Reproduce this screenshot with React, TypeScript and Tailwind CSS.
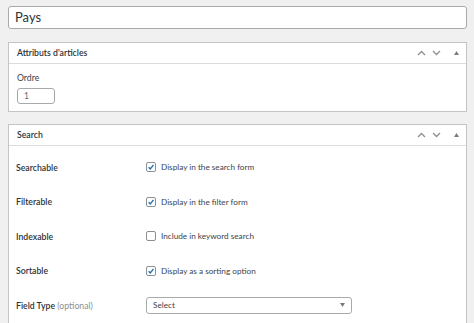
import React from "react";

const font = { fontFamily: '"Lato", "Noto Sans", sans-serif' };

function HeaderIcons() {
  return (
    <div className="flex items-center text-[#8c8f94]">
      <svg width="9" height="6" viewBox="0 0 9 6" fill="none" stroke="currentColor" strokeWidth="1.3">
        <path d="M1 5 L4.5 1.5 L8 5" />
      </svg>
      <svg className="ml-[6px]" width="9" height="6" viewBox="0 0 9 6" fill="none" stroke="currentColor" strokeWidth="1.3">
        <path d="M1 1 L4.5 4.5 L8 1" />
      </svg>
      <svg className="ml-[13px]" width="5" height="4" viewBox="0 0 5 4" fill="#787c82">
        <path d="M0 4 L2.5 0 L5 4 Z" />
      </svg>
    </div>
  );
}

function Checkbox({ checked }: { checked: boolean }) {
  return (
    <span className="flex h-[10px] w-[10px] items-center justify-center rounded-[2px] border border-[#8c8f94] bg-white">
      {checked && (
        <svg width="8" height="8" viewBox="0 0 8 8" fill="none" stroke="#2271b1" strokeWidth="1.4">
          <path d="M1.6 4.2 L3.3 5.9 L6.5 1.9" />
        </svg>
      )}
    </span>
  );
}

function Row({ label, optional, children }: { label: string; optional?: boolean; children: React.ReactNode }) {
  return (
    <div className="flex h-[34.5px] items-center">
      <div className="w-[130px] text-[8.7px] font-semibold text-[#2c3338]">
        {label}
        {optional && <span className="font-normal text-[#8c8f94]"> (optional)</span>}
      </div>
      <div className="flex items-center">{children}</div>
    </div>
  );
}

export default function App() {
  return (
    <div className="h-[323px] w-[474px] overflow-hidden bg-[#f0f0f1] pl-[8px] pr-[7px] pt-[6px]" style={font}>
      <div className="flex h-[23px] items-center rounded-[3px] border border-[#a7aaad] bg-white pl-[6px] text-[13px] text-[#2c3338]">
        Pays
      </div>

      <div className="mt-[13px] border border-[#c3c4c7] bg-white">
        <div className="flex h-[21px] items-center justify-between border-b border-[#dcdcde] pl-[8px] pr-[7px]">
          <span className="text-[8.7px] font-semibold text-[#2c3338]">Attributs d'articles</span>
          <HeaderIcons />
        </div>
        <div className="px-[8px] pb-[7px] pt-[8px]">
          <div className="text-[8.7px] leading-[12px] text-[#3c434a]">Ordre</div>
          <div className="mt-[4px] flex h-[16px] w-[38px] items-center rounded-[3px] border border-[#a7aaad] pl-[6px] text-[8.5px] text-[#646970]">
            1
          </div>
        </div>
      </div>

      <div className="mt-[12px] border border-b-0 border-[#c3c4c7] bg-white">
        <div className="flex h-[21px] items-center justify-between border-b border-[#dcdcde] pl-[8px] pr-[7px]">
          <span className="text-[8.7px] font-semibold text-[#2c3338]">Search</span>
          <HeaderIcons />
        </div>
        <div className="px-[7px] pt-[4px]">
          <Row label="Searchable">
            <Checkbox checked />
            <span className="ml-[5px] text-[8.2px] text-[#3c434a]">Display in the search form</span>
          </Row>
          <Row label="Filterable">
            <Checkbox checked />
            <span className="ml-[5px] text-[8.2px] text-[#3c434a]">Display in the filter form</span>
          </Row>
          <Row label="Indexable">
            <Checkbox checked={false} />
            <span className="ml-[5px] text-[8.2px] text-[#3c434a]">Include in keyword search</span>
          </Row>
          <Row label="Sortable">
            <Checkbox checked />
            <span className="ml-[5px] text-[8.2px] text-[#3c434a]">Display as a sorting option</span>
          </Row>
          <Row label="Field Type" optional>
            <div className="flex h-[17px] w-[206px] items-center justify-between rounded-[3px] border border-[#a7aaad] pl-[6px] pr-[6px] text-[8.2px] text-[#3c434a]">
              <span>Select</span>
              <svg width="5" height="4" viewBox="0 0 5 4" fill="#787c82">
                <path d="M0 0 L5 0 L2.5 4 Z" />
              </svg>
            </div>
          </Row>
        </div>
      </div>
    </div>
  );
}
